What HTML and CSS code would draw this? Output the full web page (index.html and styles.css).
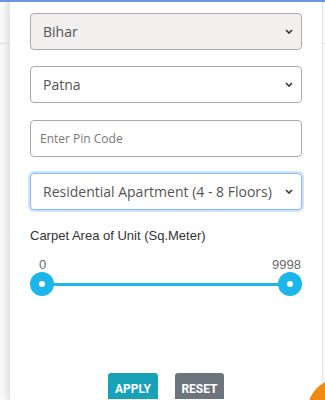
FILE: index.html
```html
<!DOCTYPE html>
<html>
<head>
<meta charset="utf-8">
<link rel="stylesheet" href="styles.css">
</head>
<body>
<div class="topline"></div>
<div class="page">
  <div class="gutter left"><div class="hdr"></div></div>
  <div class="panel">
    <div class="field sel disabled"><span>Bihar</span><svg class="chev" viewBox="0 0 8 5"><path d="M1 1 L4 4 L7 1" fill="none" stroke="#333" stroke-width="1.6"/></svg></div>
    <div class="field sel g16"><span>Patna</span><svg class="chev" viewBox="0 0 8 5"><path d="M1 1 L4 4 L7 1" fill="none" stroke="#333" stroke-width="1.6"/></svg></div>
    <div class="field input g17"><span class="ph">Enter Pin Code</span></div>
    <div class="field sel focus g16"><span>Residential Apartment (4 - 8 Floors)</span><svg class="chev" viewBox="0 0 8 5"><path d="M1 1 L4 4 L7 1" fill="none" stroke="#333" stroke-width="1.6"/></svg></div>
    <div class="label">Carpet Area of Unit (Sq.Meter)</div>
    <div class="range">
      <div class="vals"><span>0</span><span>9998</span></div>
      <div class="track">
        <div class="knob"></div>
        <div class="bar"></div>
        <div class="knob"></div>
      </div>
    </div>
    <div class="buttons">
      <button class="btn apply">APPLY</button>
      <button class="btn reset">RESET</button>
    </div>
  </div>
  <div class="gutter right"><div class="hdr"></div></div>
</div>
<div class="fab"></div>
</body>
</html>
```

FILE: styles.css
```css
html, body {
  margin: 0;
  padding: 0;
  height: 100%;
  overflow: hidden;
  background: #fff;
}
body {
  font-family: "Open Sans", "Liberation Sans", sans-serif;
  position: relative;
}
.topline {
  height: 2px;
  background: #6b94e2;
}
.page {
  display: flex;
  height: 398px;
  overflow: hidden;
}
.gutter.left {
  width: 10px;
  background: linear-gradient(to right, #fafafa, #eeeeee);
}
.gutter.right {
  width: 2px;
  flex: 1;
  background: #fafafa;
}
.hdr {
  height: 41px;
  border-bottom: 1px solid #dedede;
}
.panel {
  box-sizing: border-box;
  width: 313px;
  height: 398px;
  padding: 11px 20px 0 20px;
  background: #fff;
  border-right: 1px solid #e6e6e6;
  box-shadow: -3px 0 6px rgba(0, 0, 0, 0.06);
  position: relative;
}
.field {
  box-sizing: border-box;
  height: 37px;
  border: 1px solid #aaaaaa;
  border-radius: 4px;
  display: flex;
  align-items: center;
  justify-content: space-between;
  padding: 0 8px 0 12px;
  color: #555;
  font-size: 14px;
}
.field.disabled { background: #f1f0ef; }
.g16 { margin-top: 16px; }
.g17 { margin-top: 17px; }
.field.input { padding-left: 9px; }
.ph {
  font-size: 12px;
  color: #777;
}
.field.focus {
  border-color: #8bb8f5;
  box-shadow: 0 0 0 2px rgba(120, 170, 245, 0.35);
}
.chev {
  width: 8px;
  height: 5px;
}
.label {
  margin-top: 18px;
  font-family: "Liberation Sans", Arial, sans-serif;
  font-size: 13px;
  color: #333;
  line-height: 15px;
}
.range {
  margin-top: 15px;
}
.vals {
  display: flex;
  justify-content: space-between;
  font-family: "Liberation Sans", Arial, sans-serif;
  font-size: 13px;
  color: #6a6a6a;
  line-height: 14px;
  padding: 0 1px 0 9px;
}
.track {
  display: flex;
  align-items: center;
}
.bar {
  flex: 1;
  height: 3px;
  background: #1cb6ea;
  margin: 0 -1px;
}
.knob {
  box-sizing: border-box;
  width: 24px;
  height: 24px;
  border-radius: 50%;
  border: 9px solid #1cb6ea;
  background: #fff;
  position: relative;
  z-index: 1;
}
.buttons {
  display: flex;
  justify-content: center;
  gap: 17px;
  margin-top: 77px;
}
.btn {
  border: 0;
  border-radius: 3px 3px 0 0;
  color: #fff;
  font-family: "Roboto", "Liberation Sans", sans-serif;
  font-weight: 700;
  font-size: 12px;
  height: 26px;
  padding: 6px 0 0 0;
  line-height: 20px;
  box-sizing: border-box;
}
.apply { background: #17a2b8; width: 50px; }
.reset { background: #6c757d; width: 49px; }
.fab {
  position: absolute;
  left: 306px;
  top: 378px;
  width: 19px;
  height: 22px;
  background: radial-gradient(circle at 34px 33px, #f08a12 32px, rgba(240, 138, 18, 0) 33px);
}
```
